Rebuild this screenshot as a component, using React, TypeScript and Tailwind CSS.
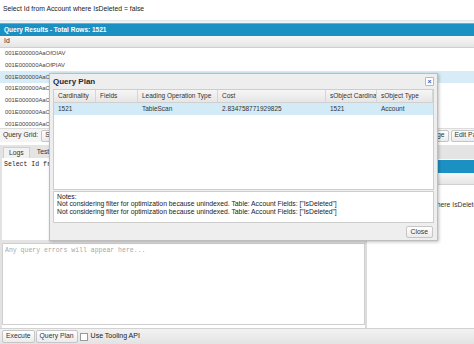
import React from 'react'

const ids = [
    '001E000000AaOfOIAV',
    '001E000000AaOfPIAV',
    '001E000000AaOfQIAV',
    '001E000000AaOfRIAV',
    '001E000000AaOfSIAV',
    '001E000000AaOfTIAV',
    '001E000000AaOfUIAV',
]

const planCols = [
    { label: 'Cardinality', value: '1521', w: 'w-[42px]' },
    { label: 'Fields', value: '', w: 'w-[42px]' },
    { label: 'Leading Operation Type', value: 'TableScan', w: 'w-[80px]' },
    { label: 'Cost', value: '2.834758771929825', w: 'w-[108px]' },
    { label: 'sObject Cardinalit', value: '1521', w: 'w-[51px]' },
    { label: 'sObject Type', value: 'Account', w: 'flex-1' },
]

const note = 'Not considering filter for optimization because unindexed. Table: Account Fields: ["IsDeleted"]'

function Btn({ children, className = '' }: { children: React.ReactNode; className?: string }) {
    return (
        <div className={`h-[12px] px-[3px] flex items-center border border-[#c6c6c6] rounded-[2px] bg-linear-to-b from-white to-[#ebebeb] text-[#333] whitespace-nowrap ${className}`}>
            {children}
        </div>
    )
}

function QueryPlanModal() {
    return (
        <div className="absolute left-[49px] top-[73px] w-[389px] h-[168px] flex flex-col bg-[#eeeeee] border border-[#bdbdbd] shadow-[1px_1px_3px_rgba(0,0,0,0.25)] px-[3px]">
            <div className="h-[15px] flex items-center justify-between">
                <span className="text-[8px] font-bold text-[#1e2a36]">Query Plan</span>
                <div className="w-[9px] h-[9px] flex items-center justify-center border border-[#b0b8c0] rounded-[1px] bg-white text-[#2b6cb0] text-[7px] font-bold leading-none">×</div>
            </div>
            <div className="h-[101px] bg-white border border-[#cdcdcd] flex flex-col text-[6.5px]">
                <div className="h-[13px] flex bg-linear-to-b from-[#f6f6f6] to-[#e6e6e6] border-b border-[#d0d0d0]">
                    {planCols.map((c) => (
                        <div key={c.label} className={`${c.w} flex items-center px-[4px] border-r border-[#d6d6d6] whitespace-nowrap overflow-hidden`}>{c.label}</div>
                    ))}
                </div>
                <div className="h-[12px] flex bg-[#d3ebf6]">
                    {planCols.map((c) => (
                        <div key={c.label} className={`${c.w} flex items-center px-[4px] whitespace-nowrap overflow-hidden`}>{c.value}</div>
                    ))}
                </div>
            </div>
            <div className="mt-[1px] h-[32px] bg-white border border-[#cdcdcd] px-[3px] pt-[1px] leading-[7.3px] text-[#222]">
                <div>Notes:</div>
                <div>{note}</div>
                <div>{note}</div>
            </div>
            <div className="flex-1 flex items-start justify-end pt-[3px] pr-[1px]">
                <Btn className="px-[4px]">Close</Btn>
            </div>
        </div>
    )
}

export default function App() {
    return (
        <div className="relative w-[474px] h-[344px] overflow-hidden bg-white text-[6.8px] text-[#333] font-['Liberation_Sans',Arial,sans-serif]">
            {/* query text */}
            <div className="h-[21px] px-[3px] pt-[4px] border-b border-[#e1e6ea] text-[#222]">Select Id from Account where IsDeleted = false</div>
            <div className="h-[2px] bg-[#eef3f6]" />

            {/* results grid */}
            <div className="h-[13px] flex items-center px-[4px] bg-[#1b91c3] border-t border-[#5db4da] text-white font-bold text-[6.5px]">Query Results - Total Rows: 1521</div>
            <div className="h-[12px] flex items-center px-[4px] bg-linear-to-b from-[#f7f7f7] to-[#e5e5e5] border-b border-[#d0d0d0]">Id</div>
            <div className="h-[80px] overflow-hidden text-[5.9px]">
                {ids.map((id, i) => (
                    <div key={id} className={`h-[11.7px] flex items-center px-[5px] text-[#444] ${i === 2 ? 'bg-[#d7ecf6]' : ''}`}>{id}</div>
                ))}
            </div>

            {/* grid toolbar */}
            <div className="h-[14px] flex items-center gap-[3px] pl-[3px] bg-[#f4f4f4] border-t border-[#dcdcdc]">
                <span>Query Grid:</span>
                <Btn>Save Rows</Btn>
                <Btn>Insert Row</Btn>
                <div className="ml-auto -mr-[14px] flex gap-[2px]">
                    <Btn>Open Detail Page</Btn>
                    <Btn>Edit Page</Btn>
                </div>
            </div>
            <div className="h-[3px]" />

            {/* lower panes */}
            <div className="h-[183px] flex">
                <div className="w-[365px] shrink-0 flex flex-col border-l-2 border-[#e2e2e2]">
                    <div className="h-[13px] flex items-end gap-[3px] pl-[1px] bg-[#e4e4e4]">
                        <div className="h-[11px] px-[5px] flex items-center bg-[#f2f2f2] border border-b-0 border-[#cfcfcf]">Logs</div>
                        <div className="h-[11px] px-[4px] flex items-center">Tests</div>
                        <div className="h-[11px] px-[4px] flex items-center">Checkpoints</div>
                    </div>
                    <div className="h-[82px] px-[2px] pt-[2px] font-['Liberation_Mono',monospace] text-[6.5px] text-[#222]">Select Id from Account where IsDeleted = false</div>
                    <div className="h-[3px] bg-[#e4e4e4]" />
                    <div className="h-[82px] border border-[#cfcfcf] px-[2px] pt-[2px] font-['Liberation_Mono',monospace] text-[6.5px] text-[#a8a8a8]">Any query errors will appear here...</div>
                </div>
                <div className="flex-1 min-w-0 overflow-hidden flex flex-col border-l-2 border-[#dcdcdc]">
                    <div className="h-[14px] bg-[#e4e4e4]" />
                    <div className="mt-[1px] h-[13px] flex items-center px-[4px] bg-[#1b91c3] text-white font-bold text-[6.5px]">History</div>
                    <div className="h-[12px] flex items-center px-[4px] bg-linear-to-b from-[#f7f7f7] to-[#e5e5e5] border-b border-[#d0d0d0]">Query</div>
                    <div className="pt-[15px] -ml-[5px] whitespace-nowrap">Select Id from Account where IsDeleted = false</div>
                </div>
            </div>

            {/* bottom bar */}
            <div className="h-[16px] flex items-center gap-[1px] pl-[2px] bg-linear-to-b from-[#f2f2f2] to-[#e3e3e3] border-t border-[#d2d2d2]">
                <Btn className="h-[13px]">Execute</Btn>
                <Btn className="h-[13px]">Query Plan</Btn>
                <div className="ml-[1px] w-[8px] h-[8px] border border-[#9a9a9a] bg-white" />
                <span className="ml-[2px] text-[7px] text-[#222]">Use Tooling API</span>
            </div>

            <QueryPlanModal />
        </div>
    )
}
